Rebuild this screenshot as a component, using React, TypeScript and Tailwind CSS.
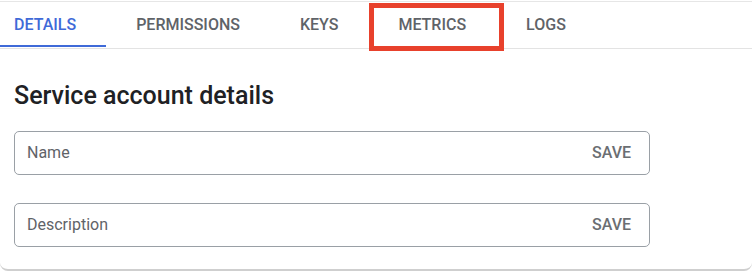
const tabs = ["DETAILS", "PERMISSIONS", "KEYS", "METRICS", "LOGS"];

const Field = ({ label }: { label: string }) => (
  <div className="flex h-[44px] w-[636px] items-center justify-between rounded-[5px] border border-[#9aa0a6] pl-[12px] pr-[18px]">
    <span className="text-[16px] text-[#5f6368]">{label}</span>
    <button className="text-[16px] font-medium text-[#6b6e72]">SAVE</button>
  </div>
);

export default function App() {
  return (
    <div
      className="h-[272px] w-[752px] overflow-hidden bg-white"
      style={{ fontFamily: "Roboto, 'Liberation Sans', sans-serif" }}
    >
      <div className="mt-[1px] h-[270px] rounded-b-[8px] border-t border-b-2 border-t-[#e6e6e6] border-b-[#cfcfcf]">
        {/* tab bar */}
        <div className="flex h-[47px] border-b border-[#e3e3e3]">
          {tabs.map((t, i) => {
            const active = i === 0;
            const marked = t === "METRICS";
            return (
              <div
                key={t}
                className={
                  "relative flex items-center pb-[1px] text-[16px] font-medium " +
                  (i === 0 ? "pl-[14px] pr-[30px] " : "px-[30px] ") +
                  (active ? "text-[#3f6ad8]" : "text-[#5f6368]")
                }
              >
                {t}
                {active && (
                  <span className="absolute bottom-[1px] left-0 right-0 h-[2px] bg-[#3f6ad8]" />
                )}
                {marked && (
                  <span className="absolute left-[1px] right-[-8px] top-[1px] bottom-[-3px] border-[5px] border-[#e8412c]" />
                )}
              </div>
            );
          })}
        </div>

        {/* content */}
        <div className="px-[14px] pt-[31px]">
          <h2 className="text-[25px] font-medium leading-[32px] text-[#202124]">
            Service account details
          </h2>
          <div className="mt-[19px] flex flex-col gap-[28px]">
            <Field label="Name" />
            <Field label="Description" />
          </div>
        </div>
      </div>
    </div>
  );
}
